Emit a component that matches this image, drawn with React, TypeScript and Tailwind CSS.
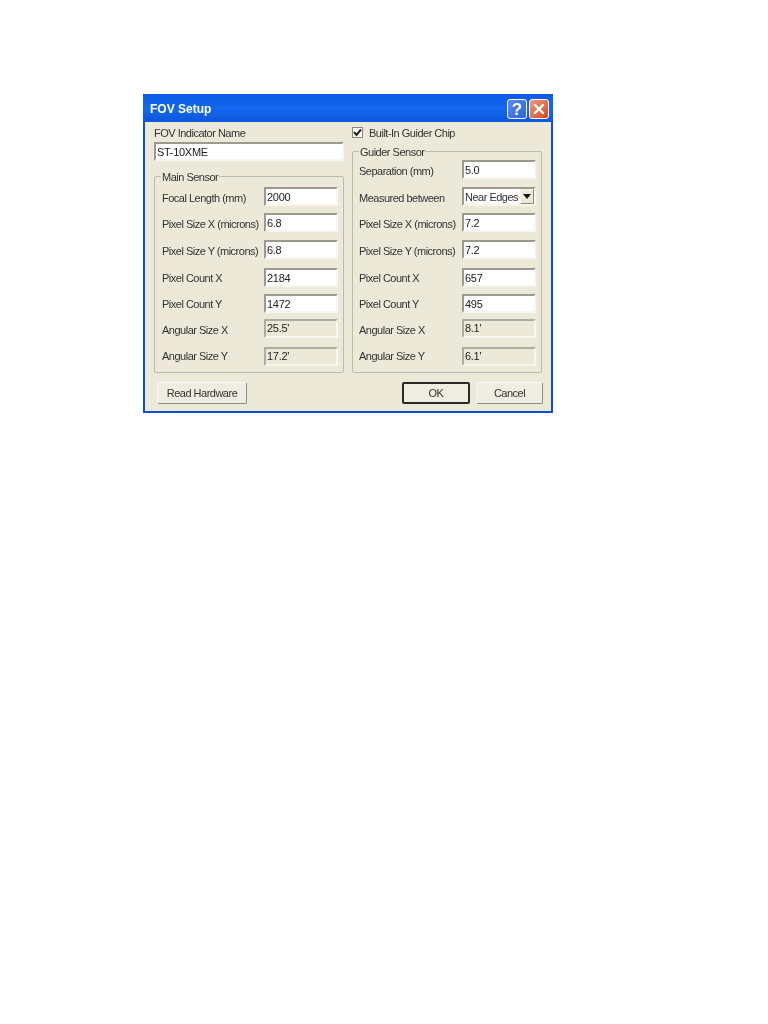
import React from "react";

const sunken = "border-2 border-t-[#9c9a8e] border-l-[#9c9a8e] border-r-[#f7f6f0] border-b-[#f7f6f0]";
const sunkenSoft = "border-2 border-t-[#aeac9e] border-l-[#aeac9e] border-r-[#f7f6f0] border-b-[#f7f6f0]";
const labelText = "whitespace-nowrap text-[11px] leading-[14px] tracking-[-0.5px] text-[#333]";

function Field({ value, disabled, w = "w-[74px]" }: { value: string; disabled?: boolean; w?: string }) {
  return (
    <div className={`${w} h-[19px] shrink-0 pl-[1px] text-[11px] leading-[14px] tracking-[-0.3px] text-[#222] ${disabled ? `${sunkenSoft} bg-[#ece9d8]` : `${sunken} bg-white pt-[1px]`}`}>
      {value}
    </div>
  );
}

function Row({ label, value, disabled, h, pt = "pt-[4px]", pl = "pl-[7px]" }: { label: string; value: string; disabled?: boolean; h: string; pt?: string; pl?: string }) {
  return (
    <div className={`flex items-start justify-between pr-[5px] ${pl} ${h}`}>
      <span className={`${labelText} ${pt}`}>{label}</span>
      <Field value={value} disabled={disabled} />
    </div>
  );
}

function Group({ title, className, children }: { title: string; className: string; children: React.ReactNode }) {
  return (
    <div className={`relative rounded-[2px] border border-[#bdbbab] ${className}`}>
      <span className={`absolute left-[6px] top-[-7px] bg-[#ece9d8] px-[1px] ${labelText} leading-[13px]`}>{title}</span>
      {children}
    </div>
  );
}

function Button({ children, className }: { children: React.ReactNode; className: string }) {
  return (
    <div className={`flex h-[22px] items-center justify-center rounded-[2px] bg-[#efede2] ${labelText} ${className}`}>
      {children}
    </div>
  );
}

export default function App() {
  return (
    <div className="h-[1024px] w-[768px] bg-white pl-[143px] pt-[94px] font-['Liberation_Sans',Arial,sans-serif]">
      <div className="flex h-[319px] w-[410px] flex-col border-2 border-t-0 border-[#0f4fd8] bg-[#ece9d8] blur-[0.3px]">
        <div className="-mx-[2px] flex h-[28px] items-center justify-between rounded-t-[3px] bg-gradient-to-b from-[#0a5ae6] via-[#1468ee] to-[#0b58dc] pl-[7px] pr-[4px]">
          <span className="pt-[2px] text-[12px] font-bold text-white">FOV Setup</span>
          <div className="flex gap-[2px] pt-[2px]">
            <div className="flex h-[20px] w-[20px] items-center justify-center rounded-[3px] border border-white bg-gradient-to-br from-[#5a8cf0] to-[#2f62d8] text-[17px] font-bold leading-none text-white">?</div>
            <div className="flex h-[20px] w-[20px] items-center justify-center rounded-[3px] border border-white bg-gradient-to-br from-[#ee9a7c] to-[#d4441e]">
              <svg width="12" height="12" viewBox="0 0 12 12" fill="none" stroke="white" strokeWidth="2.4" strokeLinecap="round"><path d="M2 2 L10 10 M10 2 L2 10" /></svg>
            </div>
          </div>
        </div>

        <div className="flex flex-1 flex-col px-[9px]">
          <div className="flex gap-[8px]">
            <div className="w-[190px]">
              <div className={`h-[20px] pt-[4px] ${labelText}`}>FOV Indicator Name</div>
              <Field value="ST-10XME" w="w-[190px]" />
              <Group title="Main Sensor" className="mt-[15px] h-[197px] pt-[10px]">
                <Row label="Focal Length (mm)" value="2000" h="h-[26px]" />
                <Row label="Pixel Size X (microns)" value="6.8" h="h-[27px]" />
                <Row label="Pixel Size Y (microns)" value="6.8" h="h-[28px]" />
                <Row label="Pixel Count X" value="2184" h="h-[26px]" pt="pt-[3px]" />
                <Row label="Pixel Count Y" value="1472" h="h-[25px]" pt="pt-[3px]" />
                <Row label="Angular Size X" value="25.5'" disabled h="h-[28px]" pt="pt-[4px]" />
                <Row label="Angular Size Y" value="17.2'" disabled h="h-[19px]" pt="pt-[2px]" />
              </Group>
            </div>
            <div className="w-[190px]">
              <div className="flex h-[20px] items-center gap-[6px] pt-[1px]">
                <div className="flex h-[11px] w-[11px] items-center justify-center border border-[#8a8878] bg-white">
                  <svg width="9" height="9" viewBox="0 0 9 9" fill="none" stroke="#222" strokeWidth="2"><path d="M1 4 L3.5 7 L8 1.5" /></svg>
                </div>
                <span className={labelText}>Built-In Guider Chip</span>
              </div>
              <Group title="Guider Sensor" className="mt-[9px] h-[222px] pt-[8px]">
                <Row label="Separation (mm)" value="5.0" h="h-[27px]" pl="pl-[6px]" />
                <div className="flex h-[26px] items-start justify-between pl-[6px] pr-[5px]">
                  <span className={`${labelText} pt-[4px]`}>Measured between</span>
                  <div className={`flex h-[19px] w-[74px] items-center justify-between bg-white pl-[1px] ${labelText} ${sunken}`}>
                    <span>Near Edges</span>
                    <div className="flex h-[15px] w-[14px] items-center justify-center border border-[#f8f7f0] border-r-[#8f8d80] border-b-[#8f8d80] bg-[#ece9d8]">
                      <svg width="8" height="5" viewBox="0 0 8 5" fill="#111"><path d="M0 0H8L4 5Z" /></svg>
                    </div>
                  </div>
                </div>
                <Row label="Pixel Size X (microns)" value="7.2" h="h-[27px]" pl="pl-[6px]" />
                <Row label="Pixel Size Y (microns)" value="7.2" h="h-[28px]" pl="pl-[6px]" />
                <Row label="Pixel Count X" value="657" h="h-[26px]" pt="pt-[3px]" pl="pl-[6px]" />
                <Row label="Pixel Count Y" value="495" h="h-[25px]" pt="pt-[3px]" pl="pl-[6px]" />
                <Row label="Angular Size X" value="8.1'" disabled h="h-[28px]" pt="pt-[4px]" pl="pl-[6px]" />
                <Row label="Angular Size Y" value="6.1'" disabled h="h-[19px]" pt="pt-[2px]" pl="pl-[6px]" />
              </Group>
            </div>
          </div>

          <div className="-mr-[1px] mt-[9px] flex items-center justify-between pl-[3px]">
            <Button className="w-[90px] border border-[#f8f7f0] border-r-[#8f8d80] border-b-[#8f8d80]">Read Hardware</Button>
            <div className="flex gap-[6px]">
              <Button className="w-[68px] border-2 border-[#2a2a2a]">OK</Button>
              <Button className="w-[67px] border border-[#f8f7f0] border-r-[#8f8d80] border-b-[#8f8d80]">Cancel</Button>
            </div>
          </div>
        </div>
      </div>
    </div>
  );
}
